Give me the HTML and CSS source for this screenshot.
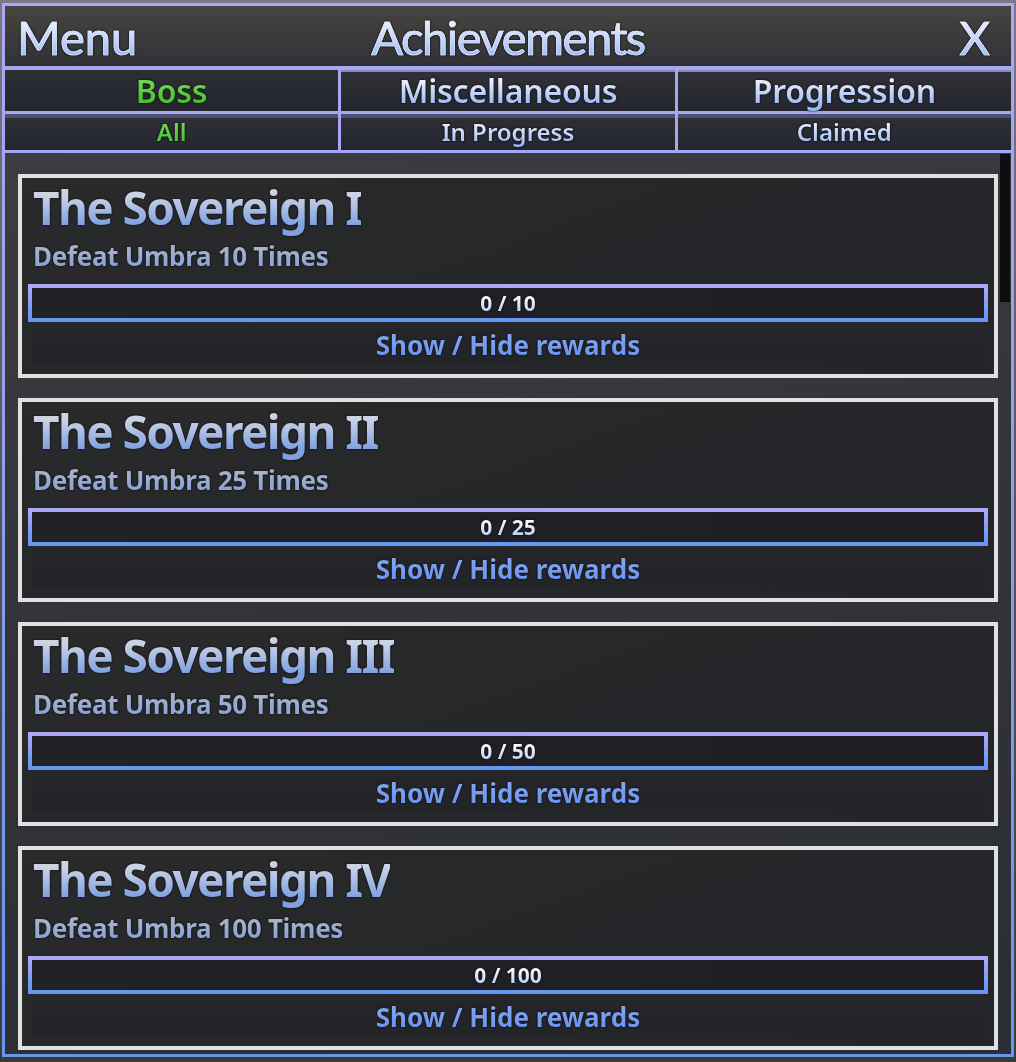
FILE: index.html
```html
<!DOCTYPE html>
<html lang="en">
<head>
<meta charset="utf-8">
<title>Achievements</title>
<link rel="stylesheet" href="styles.css">
</head>
<body>
<div class="frame">
  <header class="header">
    <span class="htext">Menu</span>
    <span class="htext title-center">Achievements</span>
    <span class="htext">X</span>
  </header>
  <nav class="tabs row1">
    <div class="tab active"><span class="ttext green">Boss</span></div>
    <div class="tab"><span class="ttext">Miscellaneous</span></div>
    <div class="tab"><span class="ttext">Progression</span></div>
  </nav>
  <nav class="tabs row2">
    <div class="tab sub"><span class="ttext small green">All</span></div>
    <div class="tab sub"><span class="ttext small">In Progress</span></div>
    <div class="tab sub"><span class="ttext small">Claimed</span></div>
  </nav>
  <main class="content">
    <div class="thumb"></div>
    <section class="card">
      <h2 class="ctitle">The Sovereign I</h2>
      <p class="csub">Defeat Umbra 10 Times</p>
      <div class="bar"><span class="bartext">0 / 10</span></div>
      <div class="rewards"><span class="rtext">Show / Hide rewards</span></div>
    </section>
    <section class="card">
      <h2 class="ctitle">The Sovereign II</h2>
      <p class="csub">Defeat Umbra 25 Times</p>
      <div class="bar"><span class="bartext">0 / 25</span></div>
      <div class="rewards"><span class="rtext">Show / Hide rewards</span></div>
    </section>
    <section class="card">
      <h2 class="ctitle">The Sovereign III</h2>
      <p class="csub">Defeat Umbra 50 Times</p>
      <div class="bar"><span class="bartext">0 / 50</span></div>
      <div class="rewards"><span class="rtext">Show / Hide rewards</span></div>
    </section>
    <section class="card">
      <h2 class="ctitle">The Sovereign IV</h2>
      <p class="csub">Defeat Umbra 100 Times</p>
      <div class="bar"><span class="bartext">0 / 100</span></div>
      <div class="rewards"><span class="rtext">Show / Hide rewards</span></div>
    </section>
  </main>
</div>
</body>
</html>
```
FILE: styles.css
```css
* { box-sizing: border-box; }
html, body { margin: 0; padding: 0; }
body {
  width: 1016px;
  height: 1062px;
  overflow: hidden;
  background: linear-gradient(to bottom, #7a7884 0%, #55534e 50%, #3c3b33 100%);
  font-family: "Noto Sans", "Liberation Sans", sans-serif;
  padding: 3px 2px 5px 2px;
}
.frame {
  width: 1012px;
  height: 1054px;
  border: 3px solid transparent;
  border-image: linear-gradient(to bottom, #aca8f2, #6796f0) 1;
  display: flex;
  flex-direction: column;
  background: #2e2f34;
}
.header {
  height: 64px;
  flex: none;
  display: flex;
  align-items: center;
  justify-content: space-between;
  padding: 2px 21px 0 12px;
  background: linear-gradient(to bottom, #47453f, #38373a 70%, #313135);
  border-bottom: 4px solid #a9a6f0;
  position: relative;
}
.htext {
  font-family: Lato, "Noto Sans", sans-serif;
  font-size: 47px;
  line-height: 58px;
  font-weight: 400;
  background: linear-gradient(to bottom, #f4f6ff 15%, #9cbaf6 85%);
  -webkit-background-clip: text;
  background-clip: text;
  color: transparent;
  filter: drop-shadow(0 0 1px rgba(0,0,0,0.9));
  -webkit-text-stroke: 0.7px #dfe8ff;
}
.title-center {
  position: absolute;
  left: 50%;
  transform: translateX(-50%);
  top: 2px;
  letter-spacing: -1.4px;
}
.tabs {
  flex: none;
  display: grid;
  grid-template-columns: 1fr 1fr 1fr;
  gap: 3px;
  background: #a9a6f0;
  border-bottom: 3px solid #a9a6f0;
}
.row1 { height: 44px; }
.row2 { height: 39px; border-bottom-color: #a4a6f2; }
.tab {
  display: flex;
  align-items: center;
  justify-content: center;
  background: linear-gradient(to bottom, #313136, #24262f);
  box-shadow: inset 0 2px 0 #7d88c6;
}
.tab.active { box-shadow: none; background: linear-gradient(to bottom, #2e2f34, #222530); }
.tab.sub {
  background: linear-gradient(to bottom, #2f3036, #24262f);
  box-shadow: inset 0 4px 0 #4c5372;
}
.ttext {
  font-size: 32px;
  line-height: 41px;
  font-weight: 600;
  letter-spacing: -0.2px;
  background: linear-gradient(to bottom, #f2f5ff 20%, #9ab8f4 85%);
  -webkit-background-clip: text;
  background-clip: text;
  color: transparent;
  filter: drop-shadow(0 0 1px rgba(0,0,0,0.9));
}
.ttext.small { font-size: 24px; line-height: 36px; letter-spacing: 0; }
.ttext.green { background-image: linear-gradient(to bottom, #74dc54 20%, #46bc2c 85%); }
.content {
  flex: 1;
  position: relative;
  overflow: hidden;
  padding: 21px 13px 0 13px;
  display: flex;
  flex-direction: column;
  gap: 20px;
  background: linear-gradient(170deg, #3d3c40 0%, #333439 45%, #2a2e35 100%);
}
.thumb {
  position: absolute;
  top: 1px;
  right: 1px;
  width: 10px;
  height: 148px;
  background: #0e0e10;
}
.card {
  flex: none;
  height: 204px;
  border: 4px solid #e1e1e1;
  background: linear-gradient(160deg, #2a2a2d 0%, #262729 50%, #232529 100%);
  padding: 6px 6px 10px 6px;
  display: flex;
  flex-direction: column;
}
.ctitle {
  margin: 0 0 -12px 5px;
  padding-bottom: 12px;
  font-size: 46px;
  line-height: 46px;
  font-weight: 700;
  letter-spacing: -1.6px;
  background: linear-gradient(to bottom, #cad2e4 20%, #80a2e2 70%);
  -webkit-background-clip: text;
  background-clip: text;
  color: transparent;
  filter: drop-shadow(0 0 1px rgba(0,0,0,0.85));
  align-self: flex-start;
}
.csub {
  margin: 13px 0 0 5px;
  font-size: 26px;
  line-height: 26px;
  font-weight: 700;
  letter-spacing: -0.3px;
  background: linear-gradient(to bottom, #a9b2cc 20%, #8aa2d6 90%);
  -webkit-background-clip: text;
  background-clip: text;
  color: transparent;
  filter: drop-shadow(0 0 1px rgba(0,0,0,0.85));
  align-self: flex-start;
}
.bar {
  margin-top: 15px;
  height: 38px;
  border: 4px solid transparent;
  border-image: linear-gradient(to bottom, #aca8f6, #6496f2) 1;
  background: linear-gradient(to right, #222226, #1f1f23);
  display: flex;
  align-items: center;
  justify-content: center;
}
.bartext {
  font-size: 21px;
  line-height: 30px;
  font-weight: 700;
  background: linear-gradient(to bottom, #ffffff 25%, #b4ccf8 85%);
  -webkit-background-clip: text;
  background-clip: text;
  color: transparent;
  filter: drop-shadow(0 0 1px rgba(0,0,0,0.95));
}
.rewards {
  height: 42px;
  margin: 0 4px;
  background: linear-gradient(to bottom, #252629, #222428);
  display: flex;
  align-items: center;
  justify-content: center;
  padding-top: 4px;
}
.rtext {
  font-size: 26px;
  line-height: 34px;
  font-weight: 700;
  background: linear-gradient(to bottom, #84a4f2 20%, #6a92ec 90%);
  -webkit-background-clip: text;
  background-clip: text;
  color: transparent;
  filter: drop-shadow(0 0 1px rgba(0,0,0,0.8));
}
```
